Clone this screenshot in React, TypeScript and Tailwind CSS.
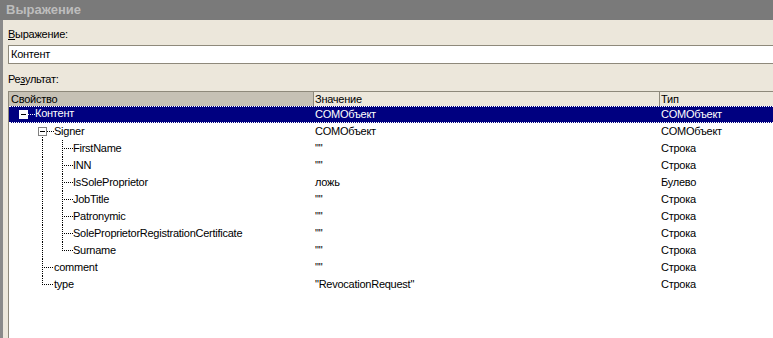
import React from "react";

type Row = {
  name: string;
  value: string;
  type: string;
  level: number;
  box?: boolean;
  selected?: boolean;
};

const rows: Row[] = [
  { name: "Контент", value: "COMОбъект", type: "COMОбъект", level: 0, box: true, selected: true },
  { name: "Signer", value: "COMОбъект", type: "COMОбъект", level: 1, box: true },
  { name: "FirstName", value: '""', type: "Строка", level: 2 },
  { name: "INN", value: '""', type: "Строка", level: 2 },
  { name: "IsSoleProprietor", value: "ложь", type: "Булево", level: 2 },
  { name: "JobTitle", value: '""', type: "Строка", level: 2 },
  { name: "Patronymic", value: '""', type: "Строка", level: 2 },
  { name: "SoleProprietorRegistrationCertificate", value: '""', type: "Строка", level: 2 },
  { name: "Surname", value: '""', type: "Строка", level: 2 },
  { name: "comment", value: '""', type: "Строка", level: 1 },
  { name: "type", value: '"RevocationRequest"', type: "Строка", level: 1 },
];

// widths of the tree area before the text, per level
const indent = [26, 45, 64];

function hDots(x1: number, x2: number, y: number, color: string) {
  const out = [];
  for (let x = x1; x <= x2; x += 2) out.push(<rect key={`h${x}-${y}`} x={x} y={y} width={1} height={1} fill={color} />);
  return out;
}

function vDots(x: number, y1: number, y2: number, color: string) {
  const out = [];
  for (let y = y1; y <= y2; y += 2) out.push(<rect key={`v${x}-${y}`} x={x} y={y} width={1} height={1} fill={color} />);
  return out;
}

function ExpandBox({ x, selected }: { x: number; selected?: boolean }) {
  return (
    <g>
      <rect x={x + 0.5} y={4.5} width={8} height={8} fill="#fff" stroke={selected ? "#fff" : "#808080"} />
      <rect x={x + 2} y={8} width={5} height={1} fill="#000" />
    </g>
  );
}

function TreeGuides({ i, row }: { i: number; row: Row }) {
  const c = row.selected ? "#fff" : "#000";
  const w = indent[row.level];
  return (
    <svg width={w} height={17} className="shrink-0">
      {i === 0 && (
        <>
          <ExpandBox x={10} selected />
          {hDots(19, 25, 8, c)}
        </>
      )}
      {i === 1 && (
        <>
          <ExpandBox x={29} />
          {vDots(33, 14, 16, c)}
          {hDots(38, 44, 8, c)}
        </>
      )}
      {i >= 2 && i <= 9 && vDots(33, 0, 16, c)}
      {i === 10 && vDots(33, 0, 8, c)}
      {i >= 2 && i <= 7 && vDots(53, 0, 16, c)}
      {i === 8 && vDots(53, 0, 8, c)}
      {i >= 2 && i <= 8 && hDots(53, 63, 8, c)}
      {i >= 9 && hDots(35, 44, 8, c)}
    </svg>
  );
}

export default function App() {
  return (
    <div
      className="w-[773px] h-[338px] overflow-hidden flex flex-col bg-[#ece7db] text-[11px] tracking-[-0.25px] text-black"
      style={{ fontFamily: '"Liberation Sans", Arial, sans-serif' }}
    >
      <div className="h-[20px] shrink-0 bg-[#7a7a7a] pl-[6px] text-[13px] font-bold leading-[20px] tracking-normal text-[#bdbdbd]">
        Выражение
      </div>
      <div className="flex flex-1 min-h-0">
        <div className="w-[3px] shrink-0 bg-[#8a8a8a]" />
        <div className="flex-1 min-w-0 pl-[5px] flex flex-col">
          <div className="pt-[7px] leading-[14px]">
            <span className="underline">В</span>ыражение:
          </div>
          <div className="mt-[4px] h-[19px] border-y border-l border-[#8e897b] bg-white pl-[2px] leading-[17px]">
            Контент
          </div>
          <div className="mt-[8px] leading-[14px]">
            Ре<span className="underline">з</span>ультат:
          </div>
          <div className="mt-[5px] flex-1 border-t border-l border-[#8e897b] bg-white flex flex-col">
            <div className="flex h-[14px] leading-[14px] shrink-0">
              <div className="w-[304px] shrink-0 bg-[#c6c1b5] pl-[2px]">Свойство</div>
              <div className="w-[346px] shrink-0 border-l border-[#8e897b] bg-[#ece7db] pl-[1px]">Значение</div>
              <div className="flex-1 border-l border-[#8e897b] bg-[#ece7db] pl-[1px]">Тип</div>
            </div>
            {rows.map((row, i) => (
              <div
                key={i}
                className={
                  row.selected
                    ? "flex h-[17px] leading-[15px] bg-[#000080] text-white border-y border-dotted border-white"
                    : "flex h-[17px] leading-[17px]"
                }
              >
                <div className={row.selected ? "w-[304px] shrink-0 flex -mt-px" : "w-[304px] shrink-0 flex"}>
                  <TreeGuides i={i} row={row} />
                  <span className="whitespace-nowrap">{row.name}</span>
                </div>
                <div className="w-[346px] shrink-0 pl-[2px] whitespace-nowrap">{row.value}</div>
                <div className="flex-1 pl-[2px] whitespace-nowrap">{row.type}</div>
              </div>
            ))}
          </div>
        </div>
      </div>
    </div>
  );
}
